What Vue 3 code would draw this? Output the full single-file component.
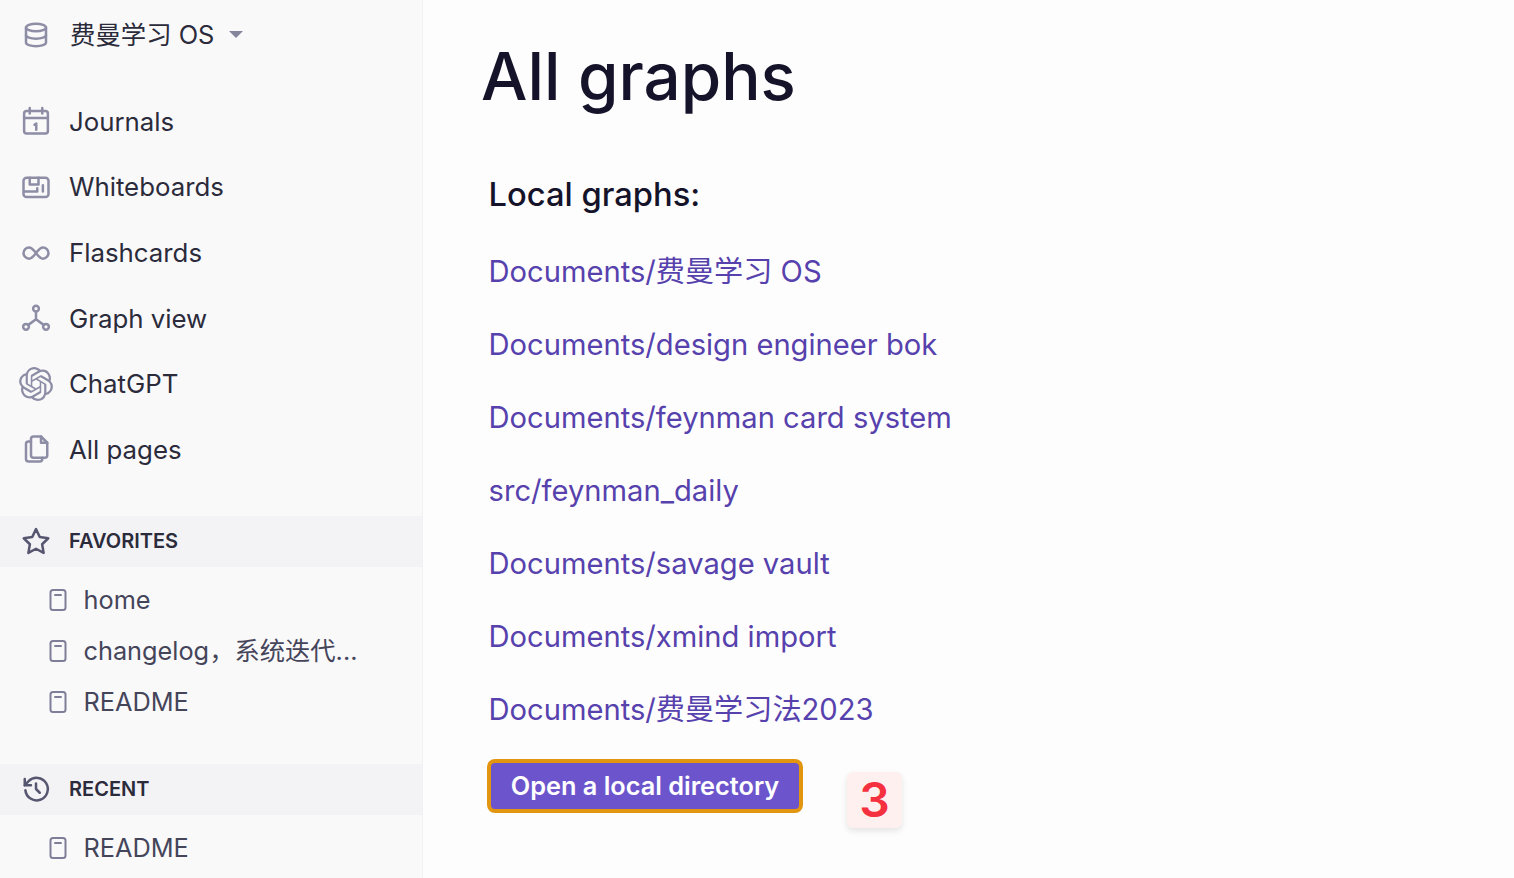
<template>
  <div class="app">
    <aside class="sidebar">
      <div class="graph-switch">
        <svg class="icon db" viewBox="0 0 24 24">
          <ellipse cx="12" cy="6" rx="8" ry="3" />
          <path d="M4 6v6c0 1.7 3.6 3 8 3s8-1.300 8-3V6" />
          <path d="M4 12v6c0 1.700 3.600 3 8 3s8-1.300 8-3v-6" />
        </svg>
        <span class="graph-name">费曼学习 OS</span>
        <span class="caret"></span>
      </div>

      <nav class="nav">
        <a class="nav-item">
          <svg class="icon" viewBox="0 0 24 24">
            <rect x="2.500" y="4" width="19" height="18" rx="2" />
            <path d="M7 1.500V6M17 1.500V6M2.500 9.500h19M10.800 15l1.400-1v5" />
          </svg>
          Journals
        </a>
        <a class="nav-item nudge">
          <svg class="icon" viewBox="0 0 24 24">
            <rect x="2" y="4.500" width="20" height="15.500" rx="2.500" />
            <path d="M7 4.500V10h7V4.500M2.500 15.500H13V13M17.500 10.500v5" />
          </svg>
          Whiteboards
        </a>
        <a class="nav-item">
          <svg class="icon" viewBox="0 0 24 24">
            <path d="M12 12C10 9.500 8.800 7.500 6.500 7.500a4.500 4.500 0 0 0 0 9c2.300 0 3.500-2 5.500-4.500s3.200-4.500 5.500-4.500a4.500 4.500 0 0 1 0 9c-2.300 0-3.500-2-5.500-4.500z" />
          </svg>
          Flashcards
        </a>
        <a class="nav-item">
          <svg class="icon" viewBox="0 0 24 24">
            <circle cx="12" cy="4.500" r="2.300" />
            <circle cx="4" cy="19" r="2.300" />
            <circle cx="20" cy="19" r="2.300" />
            <path d="M12 6.800V13M12 13l-6.100 4.500M12 13l6.100 4.500" />
          </svg>
          Graph view
        </a>
        <a class="nav-item">
          <svg class="icon gpt" viewBox="0 0 24 24">
            <path d="M22.2819 9.8211a5.9847 5.9847 0 0 0-.5157-4.9108 6.0462 6.0462 0 0 0-6.5098-2.9A6.0651 6.0651 0 0 0 4.9807 4.1818a5.9847 5.9847 0 0 0-3.9977 2.9 6.0462 6.0462 0 0 0 .7427 7.0966 5.98 5.98 0 0 0 .511 4.9107 6.051 6.051 0 0 0 6.5146 2.9001A5.9847 5.9847 0 0 0 13.2599 24a6.0557 6.0557 0 0 0 5.7718-4.2058 5.9894 5.9894 0 0 0 3.9977-2.9001 6.0557 6.0557 0 0 0-.7475-7.0729zm-9.022 12.6081a4.4755 4.4755 0 0 1-2.8764-1.0408l.1419-.0804 4.7783-2.7582a.7948.7948 0 0 0 .3927-.6813v-6.7369l2.02 1.1686a.071.071 0 0 1 .038.052v5.5826a4.504 4.504 0 0 1-4.4945 4.4944zm-9.6607-4.1254a4.4708 4.4708 0 0 1-.5346-3.0137l.142.0852 4.783 2.7582a.7712.7712 0 0 0 .7806 0l5.8428-3.3685v2.3324a.0804.0804 0 0 1-.0332.0615L9.74 19.9502a4.4992 4.4992 0 0 1-6.1408-1.6464zM2.3408 7.8956a4.485 4.485 0 0 1 2.3655-1.9728V11.6a.7664.7664 0 0 0 .3879.6765l5.8144 3.3543-2.0201 1.1685a.0757.0757 0 0 1-.071 0l-4.8303-2.7865A4.504 4.504 0 0 1 2.3408 7.872zm16.5963 3.8558L13.1038 8.364 15.1192 7.2a.0757.0757 0 0 1 .071 0l4.8303 2.7913a4.4944 4.4944 0 0 1-.6765 8.1042v-5.6772a.79.79 0 0 0-.407-.667zm2.0107-3.0231l-.142-.0852-4.7735-2.7818a.7759.7759 0 0 0-.7854 0L9.409 9.2297V6.8974a.0662.0662 0 0 1 .0284-.0615l4.8303-2.7866a4.4992 4.4992 0 0 1 6.6802 4.66zM8.3065 12.863l-2.02-1.1638a.0804.0804 0 0 1-.038-.0567V6.0742a4.4992 4.4992 0 0 1 7.3757-3.4537l-.142.0805L8.704 5.459a.7948.7948 0 0 0-.3927.6813zm1.0976-2.3654l2.602-1.4998 2.6069 1.4998v2.9994l-2.5974 1.4997-2.6067-1.4997Z" />
          </svg>
          ChatGPT
        </a>
        <a class="nav-item">
          <svg class="icon" viewBox="0 0 24 24">
            <path d="M10 2h6l5 5v10a2 2 0 0 1-2 2h-9a2 2 0 0 1-2-2V4a2 2 0 0 1 2-2z" />
            <path d="M16 2v5h5" />
            <path d="M8 6H6a2 2 0 0 0-2 2v12a2 2 0 0 0 2 2h9a2 2 0 0 0 2-2v-1" />
          </svg>
          All pages
        </a>
      </nav>

      <section class="group">
        <div class="group-head">
          <svg class="icon dark" viewBox="0 0 24 24">
            <path d="M12 2.500l3 6.300 6.800 1-4.900 4.800 1.200 6.900-6.100-3.300-6.100 3.300 1.200-6.900-4.900-4.800 6.800-1z" />
          </svg>
          FAVORITES
        </div>
        <ul class="page-list">
          <li v-for="page in favorites" :key="page">
            <svg class="page-icon" viewBox="0 0 18 24">
              <rect x="1.500" y="2" width="15" height="20" rx="2.500" />
              <path d="M6 7h6" />
            </svg>
            <span>{{ page }}</span>
          </li>
        </ul>
      </section>

      <section class="group recent">
        <div class="group-head">
          <svg class="icon dark" viewBox="0 0 24 24">
            <path d="M3.500 13a9 9 0 1 0 2.600-7.300L3 9" />
            <path d="M3 4v5h5M12 7.500V12l3 3" />
          </svg>
          RECENT
        </div>
        <ul class="page-list">
          <li>
            <svg class="page-icon" viewBox="0 0 18 24">
              <rect x="1.500" y="2" width="15" height="20" rx="2.500" />
              <path d="M6 7h6" />
            </svg>
            <span>README</span>
          </li>
        </ul>
      </section>
    </aside>

    <main class="content">
      <h1>All graphs</h1>
      <div class="graphs">
        <h2>Local graphs:</h2>
        <a v-for="graph in graphs" :key="graph" class="graph-link">{{ graph }}</a>
        <div class="action">
          <button class="open-btn">Open a local directory</button>
          <span class="step-badge">3</span>
        </div>
      </div>
    </main>
  </div>
</template>

<script setup>
const favorites = ['home', 'changelog，系统迭代...', 'README']

const graphs = [
  'Documents/费曼学习 OS',
  'Documents/design engineer bok',
  'Documents/feynman card system',
  'src/feynman_daily',
  'Documents/savage vault',
  'Documents/xmind import',
  'Documents/费曼学习法2023'
]
</script>

<style>
html, body {
  margin: 0;
  overflow: hidden;
}
</style>

<style scoped>
.app {
  display: flex;
  height: 878px;
  overflow: hidden;
  background: #fdfdfd;
  font-family: Inter, 'Noto Sans CJK SC', sans-serif;
  color: #2b2b3b;
}

.sidebar {
  width: 422px;
  flex-shrink: 0;
  border-right: 1px solid #f1f1f3;
  background: #f9f9fa;
}

.icon {
  width: 30px;
  height: 30px;
  flex-shrink: 0;
  fill: none;
  stroke: #8d8da6;
  stroke-width: 2;
  stroke-linecap: round;
  stroke-linejoin: round;
}
.icon.gpt {
  width: 34px;
  height: 34px;
  margin: 0 -2px;
  fill: #8d8da6;
  stroke: none;
}
.icon.dark {
  stroke: #565670;
}

.graph-switch {
  display: flex;
  align-items: center;
  height: 69px;
  padding-left: 21px;
  font-size: 25.4px;
  line-height: 34px;
}
.graph-name {
  margin-left: 19px;
}
.caret {
  margin-left: 15px;
  border-left: 7px solid transparent;
  border-right: 7px solid transparent;
  border-top: 7px solid #85859c;
}

.nav {
  display: flex;
  flex-direction: column;
  margin-top: 19.7px;
}
.nav-item {
  display: flex;
  align-items: center;
  gap: 18px;
  height: 65.6px;
  padding-left: 21px;
  font-size: 25.8px;
}
.nav-item.nudge {
  padding-bottom: 1px;
  box-sizing: border-box;
}

.group {
  margin-top: 33.3px;
}
.group.recent {
  margin-top: 36px;
}
.group-head {
  display: flex;
  align-items: center;
  gap: 18px;
  height: 51px;
  padding-left: 21px;
  background: #f3f2f5;
  font-size: 20px;
  font-weight: 600;
}

.page-list {
  list-style: none;
  margin: 8px 0 0;
  padding: 0;
}
.page-list li {
  display: flex;
  align-items: center;
  gap: 16.5px;
  height: 51px;
  padding-left: 49px;
  font-size: 25.3px;
  line-height: 30px;
  color: #45455a;
  white-space: pre;
}
.page-icon {
  width: 18px;
  height: 24px;
  flex-shrink: 0;
  fill: none;
  stroke: #7e7e98;
  stroke-width: 2;
  stroke-linecap: round;
}

.content {
  flex: 1;
  padding-left: 58px;
}
h1 {
  margin: 34px 0 0;
  font-size: 65.5px;
  line-height: 86px;
  font-weight: 500;
  color: #15132a;
}

.graphs {
  display: flex;
  flex-direction: column;
  align-items: flex-start;
  padding-left: 7.6px;
}
h2 {
  margin: 51px 0 2px;
  font-size: 32.7px;
  line-height: 46px;
  font-weight: 500;
  color: #15132a;
}
.graph-link {
  margin-top: 33px;
  font-size: 29.15px;
  line-height: 40px;
  color: #5641ad;
}

.action {
  position: relative;
  margin-top: 29px;
  margin-left: -1.6px;
}
.open-btn {
  display: block;
  width: 316px;
  height: 54px;
  padding: 0 0 1px;
  border: 4px solid #e2960f;
  border-radius: 8px;
  background: #6c55cc;
  color: #fff;
  font-family: inherit;
  font-size: 25.3px;
  font-weight: 600;
}
.step-badge {
  position: absolute;
  left: 360px;
  top: 13px;
  width: 55px;
  height: 56px;
  border-radius: 6px;
  background: #fff0f0;
  box-shadow: 0 3px 6px rgba(0, 0, 0, 0.1);
  color: #f5303f;
  font-size: 48px;
  font-weight: 600;
  line-height: 56px;
  text-align: center;
}
</style>
